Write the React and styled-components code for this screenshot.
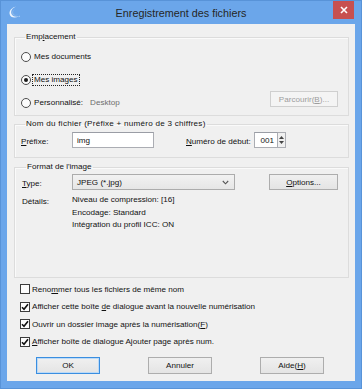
import React from 'react';
import styled, { createGlobalStyle } from 'styled-components';

const Global = createGlobalStyle`
  html, body { margin: 0; padding: 0; background: #fff; }
  body { font-family: "Liberation Sans", Arial, sans-serif; }
  * { box-sizing: border-box; }
`;

const Window = styled.div`
  width: 362px;
  height: 389px;
  background: #6ba6ea;
  border: 1px solid #5893d8;
  display: flex;
  flex-direction: column;
`;

const TitleBar = styled.div`
  height: 23px;
  display: grid;
  grid-template-columns: 1fr auto 1fr;
  align-items: start;
`;

const AppIcon = styled.svg`
  margin: 5px 0 0 8px;
  display: block;
`;

const Title = styled.div`
  font-size: 10.8px;
  line-height: 24px;
  color: #262626;
  white-space: nowrap;
`;

const CloseButton = styled.div`
  justify-self: end;
  width: 21px;
  height: 18px;
  margin-right: 7px;
  background: #c75050;
  display: flex;
  align-items: center;
  justify-content: center;
`;

const Client = styled.div`
  flex: 1;
  margin: 0 6px 7px 6px;
  background: #f0f0f0;
  padding: 8px 6px 0 7px;
  display: flex;
  flex-direction: column;
  font-size: 8.1px;
  color: #111;
`;

const Group = styled.fieldset`
  margin: ${(p) => p.$mt || 0}px 0 0 0;
  padding: ${(p) => p.$pad};
  border: 1px solid #dcdcdc;
  box-shadow: inset 1px 1px 0 #fafafa;
  min-width: 0;
`;

const Legend = styled.legend`
  font-size: 8.1px;
  line-height: 10px;
  margin-left: 4px;
  padding: 0 1px;
  white-space: nowrap;
  letter-spacing: ${(p) => p.$ls || 0}px;
`;

const U = styled.span`
  text-decoration: underline;
  text-underline-offset: 1px;
`;

const RadioRow = styled.div`
  height: 23px;
  display: flex;
  align-items: center;
`;

const RadioCircle = styled.span`
  width: 10px;
  height: 10px;
  border-radius: 50%;
  border: 1px solid #4d4d4d;
  background: #fcfcfc;
  display: flex;
  align-items: center;
  justify-content: center;
  flex: none;
  &::after {
    content: '';
    width: 4px;
    height: 4px;
    border-radius: 50%;
    background: ${(p) => (p.$on ? '#1a1a1a' : 'transparent')};
  }
`;

const OptionText = styled.span`
  margin-left: 2px;
  padding: 0 1px;
  line-height: 10px;
  white-space: nowrap;
  outline: ${(p) => (p.$focus ? '1px dotted #222' : 'none')};
`;

const Muted = styled.span`
  color: #6d6d6d;
  margin-left: 6px;
`;

const Button = styled.div`
  width: ${(p) => p.$w}px;
  height: ${(p) => p.$h || 16}px;
  flex: none;
  display: flex;
  align-items: center;
  justify-content: center;
  border: 1px solid ${(p) => (p.$default ? '#3a8ee0' : p.$disabled ? '#cfcfcf' : '#adadad')};
  background: ${(p) => (p.$disabled ? '#f4f4f4' : 'linear-gradient(#f0f0f0, #e4e4e4)')};
  color: ${(p) => (p.$disabled ? '#9d9d9d' : '#111')};
  box-shadow: ${(p) => (p.$default ? 'inset 0 0 0 1px #bcdaf7' : 'none')};
  white-space: nowrap;
  font-size: 8.1px;
`;

const BrowseButton = styled(Button)`
  margin-left: auto;
  align-self: flex-start;
`;

const FieldRow = styled.div`
  height: 16px;
  display: flex;
  align-items: center;
`;

const FieldLabel = styled.span`
  width: ${(p) => p.$w || 51}px;
  flex: none;
  white-space: nowrap;
  padding-top: 2px;
`;

const TextBox = styled.div`
  width: ${(p) => p.$w}px;
  height: 16px;
  background: #fff;
  border: 1px solid #abadb3;
  border-top-color: #9a9da5;
  display: flex;
  align-items: center;
  padding-left: ${(p) => p.$pl || 4}px;
  justify-content: ${(p) => (p.$right ? 'flex-end' : 'flex-start')};
  padding-right: ${(p) => (p.$right ? 3 : 0)}px;
`;

const Spinner = styled.div`
  width: 8px;
  height: 16px;
  border: 1px solid #abadb3;
  border-left: none;
  background: #f0f0f0;
  display: flex;
  flex-direction: column;
  align-items: center;
  justify-content: center;
  gap: 2px;
`;

const Gap = styled.span`
  width: ${(p) => p.$w}px;
  flex: none;
`;

const Combo = styled.div`
  width: 163px;
  height: 16px;
  border: 1px solid #acacac;
  background: linear-gradient(#f2f2f2, #e6e6e6);
  display: flex;
  align-items: center;
  padding: 0 5px 0 4px;
  justify-content: space-between;
`;

const DetailsRow = styled.div`
  display: flex;
  margin-top: 4px;
  line-height: 12.5px;
`;

const DetailLines = styled.div`
  display: flex;
  flex-direction: column;
`;

const CheckList = styled.div`
  margin-top: 3px;
  display: flex;
  flex-direction: column;
  padding-left: 6px;
`;

const CheckRow = styled.div`
  height: 17.5px;
  display: flex;
  align-items: center;
  white-space: nowrap;
`;

const CheckBox = styled.span`
  width: 10px;
  height: 10px;
  border: 1px solid #3c3c3c;
  background: #fdfdfd;
  flex: none;
  display: flex;
  align-items: center;
  justify-content: center;
  margin-right: 2px;
`;

const ButtonBar = styled.div`
  margin-top: 6px;
  display: flex;
  gap: 48px;
  padding-left: 22px;
`;

const Radio = ({ on, focus, children }) => (
  <>
    <RadioCircle $on={on} />
    <OptionText $focus={focus}>{children}</OptionText>
  </>
);

const Check = ({ on, children }) => (
  <CheckRow>
    <CheckBox>
      {on && (
        <svg width="8" height="8" viewBox="0 0 8 8">
          <path d="M1 4.2 L3 6.3 L7 1.2" fill="none" stroke="#111" strokeWidth="1.6" />
        </svg>
      )}
    </CheckBox>
    <span>{children}</span>
  </CheckRow>
);

export default function App() {
  return (
    <>
      <Global />
      <Window>
        <TitleBar>
          <AppIcon width="11" height="13" viewBox="0 0 11 13">
            <path d="M7 0.5 C3 2 1.5 5 2.5 8 C3.2 10 5.5 11 9.5 10.5 C6 12.5 1.2 11.8 0.6 8 C0 4.5 3 1.5 7 0.5 Z" fill="#eef5fd" />
            <path d="M6 3 C4 4.5 3.6 6.5 4.6 8 C5.4 9 7 9.2 9 8.6 C7.2 10 4.2 10 3.3 8.2 C2.5 6.4 3.8 4.2 6 3 Z" fill="#8db9ea" />
            <path d="M9.5 10.5 L10.6 9.4 L10.4 11 Z" fill="#e8f1fc" />
          </AppIcon>
          <Title>Enregistrement des fichiers</Title>
          <CloseButton>
            <svg width="8" height="8" viewBox="0 0 8 8">
              <path d="M1 1 L7 7 M7 1 L1 7" stroke="#fff" strokeWidth="1.6" />
            </svg>
          </CloseButton>
        </TitleBar>
        <Client>
          <Group $pad="3px 10px 1px 6px">
            <Legend>
              Emp<U>l</U>acement
            </Legend>
            <RadioRow>
              <Radio>Mes documents</Radio>
            </RadioRow>
            <RadioRow>
              <Radio on focus>
                Mes images
              </Radio>
            </RadioRow>
            <RadioRow>
              <Radio>Personnalisé:</Radio>
              <Muted>Desktop</Muted>
              <BrowseButton $w={68} $disabled>
                Parcourir(<U>B</U>)...
              </BrowseButton>
            </RadioRow>
          </Group>

          <Group $mt={3} $pad="3px 6px 9px 6px">
            <Legend $ls={0.25}>Nom du fichier (Préfixe + numéro de 3 chiffres)</Legend>
            <FieldRow>
              <FieldLabel>
                <U>P</U>réfixe:
              </FieldLabel>
              <TextBox $w={82}>img</TextBox>
              <Gap $w={32} />
              <FieldLabel $w={68}>
                <U>N</U>uméro de début:
              </FieldLabel>
              <TextBox $w={24} $right>
                001
              </TextBox>
              <Spinner>
                <svg width="5" height="3" viewBox="0 0 5 3">
                  <path d="M0 3 L2.5 0 L5 3 Z" fill="#444" />
                </svg>
                <svg width="5" height="3" viewBox="0 0 5 3">
                  <path d="M0 0 L2.5 3 L5 0 Z" fill="#444" />
                </svg>
              </Spinner>
            </FieldRow>
          </Group>

          <Group $mt={4} $pad="2px 10px 45px 7px">
            <Legend>Format de l'image</Legend>
            <FieldRow>
              <FieldLabel $w={50}>
                <U>T</U>ype:
              </FieldLabel>
              <Combo>
                <span>JPEG (*.jpg)</span>
                <svg width="7" height="5" viewBox="0 0 7 5">
                  <path d="M0.8 1 L3.5 3.8 L6.2 1" fill="none" stroke="#555" strokeWidth="1.1" />
                </svg>
              </Combo>
              <Gap $w={34} />
              <Button $w={69}>
                <U>O</U>ptions...
              </Button>
            </FieldRow>
            <DetailsRow>
              <FieldLabel $w={50}>Détails:</FieldLabel>
              <DetailLines>
                <span>Niveau de compression: [16]</span>
                <span>Encodage: Standard</span>
                <span>Intégration du profil ICC: ON</span>
              </DetailLines>
            </DetailsRow>
          </Group>

          <CheckList>
            <Check>
              Reno<U>m</U>mer tous les fichiers de même nom
            </Check>
            <Check on>
              Afficher cette boîte <U>d</U>e dialogue avant la nouvelle numérisation
            </Check>
            <Check on>
              Ouvrir un dossier image après la numérisation(<U>F</U>)
            </Check>
            <Check on>
              <U>A</U>fficher boîte de dialogue Ajouter page après num.
            </Check>
          </CheckList>

          <ButtonBar>
            <Button $w={64} $h={17} $default>
              OK
            </Button>
            <Button $w={64} $h={17}>
              Annuler
            </Button>
            <Button $w={64} $h={17}>
              Aide(<U>H</U>)
            </Button>
          </ButtonBar>
        </Client>
      </Window>
    </>
  );
}
